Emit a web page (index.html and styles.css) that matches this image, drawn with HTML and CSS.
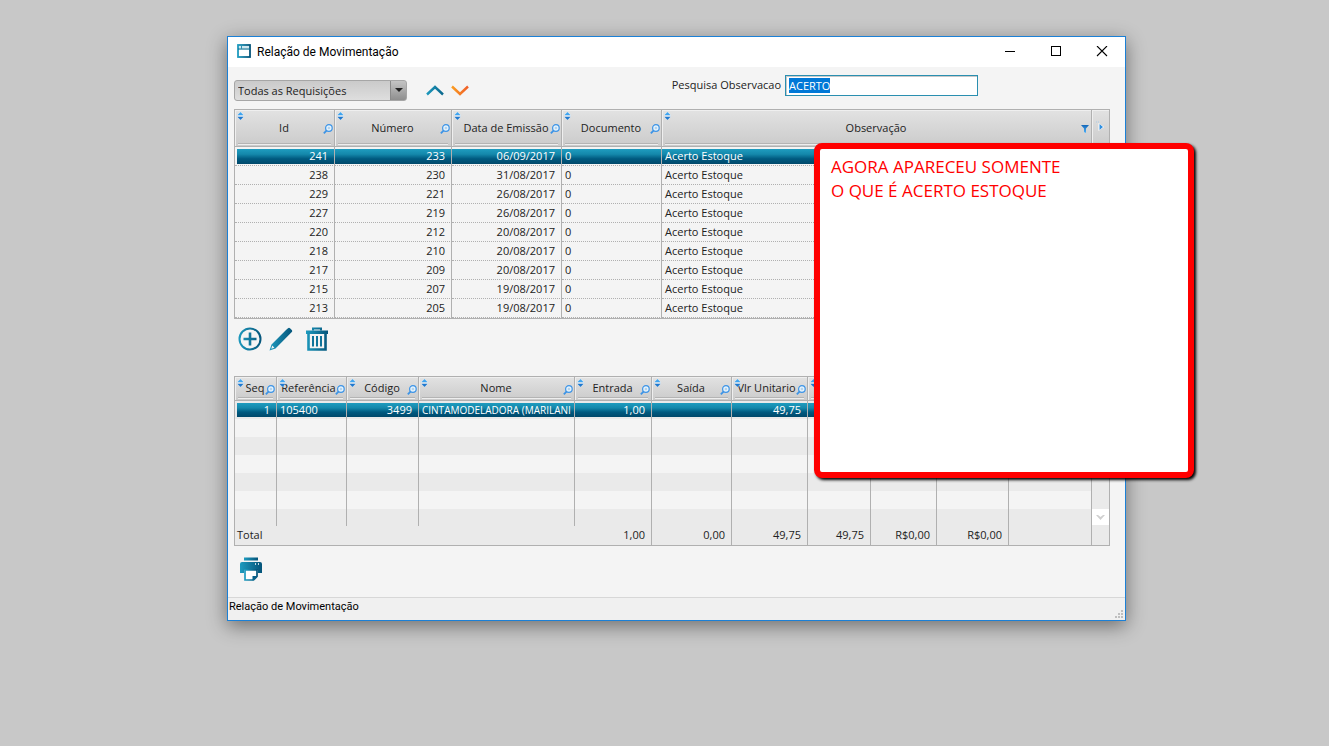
FILE: index.html
```
<!DOCTYPE html>
<html lang="pt-BR">
    <head>
        <meta charset="utf-8">
        <title>Relação de Movimentação</title>
        <link rel="stylesheet" href="styles.css">
    </head>
    <body>
        <!-- shared icons -->
        <svg class="defs" aria-hidden="true">
            <defs>
                <linearGradient id="teal" x1="0" y1="0" x2="1" y2="0">
                    <stop offset="0" stop-color="#1e9bbf"/>
                    <stop offset="1" stop-color="#045379"/>
                </linearGradient>
                <linearGradient id="tealLine" gradientUnits="userSpaceOnUse" x1="0" y1="0" x2="24" y2="0">
                    <stop offset="0" stop-color="#1e9bbf"/>
                    <stop offset="1" stop-color="#045379"/>
                </linearGradient>
                <linearGradient id="orange" gradientUnits="userSpaceOnUse" x1="0" y1="0" x2="18" y2="0">
                    <stop offset="0" stop-color="#fba01f"/>
                    <stop offset="1" stop-color="#ef5a29"/>
                </linearGradient>
                <linearGradient id="blue" x1="0" y1="0" x2="0" y2="1">
                    <stop offset="0" stop-color="#1668b8"/>
                    <stop offset="1" stop-color="#4db2fb"/>
                </linearGradient>
            </defs>
            <symbol id="sort" viewBox="0 0 7 8">
                <path d="M3.500 -.2L7.200 3.500H-.2zM3.500 8.200L7.200 4.500H-.2z" fill="#fff"/>
                <path d="M3.500 0L6.700 3.300H.3z" fill="#3fa4ef"/>
                <path d="M.3 4.700h6.400L3.500 8z" fill="#1f78ce"/>
            </symbol>
            <symbol id="lens" viewBox="0 0 10 10">
                <path d="M.8 9.300L3.500 6.600" stroke="#3d94e6" stroke-width="1.800"/>
                <circle cx="5.900" cy="4" r="3.300" fill="#e3f2fd" stroke="#3d94e6" stroke-width="1.200"/>
                <circle cx="5.900" cy="4" r="1.300" fill="#b4d2ea"/>
            </symbol>
        </svg>

        <div class="window">
            <div class="titlebar">
                <svg class="appicon" width="14" height="14" viewBox="0 0 14 14">
                    <rect x="1" y="1" width="12" height="12" fill="#fff" stroke="url(#teal)" stroke-width="1.800"/>
                    <path d="M1 5h12" stroke="#0f7598" stroke-width="1.200"/>
                    <path d="M4.500 1v4" stroke="#2b8fb0" stroke-width="1"/>
                    <path d="M2 3h2M5 3h7" stroke="#9fd0e0" stroke-width="1"/>
                </svg>
                <span class="caption">Relação de Movimentação</span>
                <button class="winbtn" aria-label="Minimizar"><svg width="12" height="12"><path d="M1 5.500h10" stroke="#000"/></svg></button>
                <button class="winbtn" aria-label="Maximizar"><svg width="12" height="12"><rect x="1.500" y=".5" width="9" height="9" fill="none" stroke="#000"/></svg></button>
                <button class="winbtn" aria-label="Fechar"><svg width="12" height="12"><path d="M1 0l10 10M11 0L1 10" stroke="#000" stroke-width="1.100"/></svg></button>
            </div>

            <div class="client">
                <div class="filters">
                    <div class="combo">
                        <select aria-label="Requisições"><option>Todas as Requisições</option></select>
                        <svg class="combo-arrow" width="8" height="4" viewBox="0 0 8 4"><path d="M0 0h8L4 4z" fill="#222"/></svg>
                    </div>
                    <button class="plain up" aria-label="Anterior"><svg width="18" height="11" viewBox="0 0 18 11"><path d="M1 9.500L9 2l8 7.500" fill="none" stroke="url(#tealLine)" stroke-width="2.400"/></svg></button>
                    <button class="plain down" aria-label="Próximo"><svg width="18" height="11" viewBox="0 0 18 11"><path d="M1 1.500L9 9l8-7.500" fill="none" stroke="url(#orange)" stroke-width="2.400"/></svg></button>
                    <div class="search">
                        <label for="pesquisa">Pesquisa Observacao</label>
                        <input id="pesquisa" type="text" value="ACERTO">
                    </div>
                </div>

                <table class="grid moves">
                    <colgroup>
                        <col class="w100"><col class="w117"><col class="w110"><col class="w100"><col><col class="w17">
                    </colgroup>
                    <thead>
                        <tr>
                            <th><svg class="sort"><use href="#sort"/></svg>Id<svg class="lens"><use href="#lens"/></svg></th>
                            <th><svg class="sort"><use href="#sort"/></svg>Número<svg class="lens"><use href="#lens"/></svg></th>
                            <th><svg class="sort"><use href="#sort"/></svg>Data de Emissão<svg class="lens"><use href="#lens"/></svg></th>
                            <th><svg class="sort"><use href="#sort"/></svg>Documento<svg class="lens"><use href="#lens"/></svg></th>
                            <th><svg class="sort"><use href="#sort"/></svg>Observação<svg class="funnel" viewBox="0 0 8 8"><path d="M0 0h8L5 3.500V8L3 7V3.500z" fill="url(#blue)"/></svg></th>
                            <th><svg class="more" viewBox="0 0 8 10"><path d="M0 1h1M2 1h1" stroke="#aacbe6"/><path d="M2.500 2v8l5.500-4z" fill="#fff"/><path d="M3.500 3v6L7 6z" fill="#2f8fe0"/></svg></th>
                        </tr>
                    </thead>
                    <tbody>
                        <tr class="selected"><td class="num">241</td><td class="num">233</td><td class="num">06/09/2017</td><td>0</td><td>Acerto Estoque</td><td></td></tr>
                        <tr><td class="num">238</td><td class="num">230</td><td class="num">31/08/2017</td><td>0</td><td>Acerto Estoque</td><td></td></tr>
                        <tr><td class="num">229</td><td class="num">221</td><td class="num">26/08/2017</td><td>0</td><td>Acerto Estoque</td><td></td></tr>
                        <tr><td class="num">227</td><td class="num">219</td><td class="num">26/08/2017</td><td>0</td><td>Acerto Estoque</td><td></td></tr>
                        <tr><td class="num">220</td><td class="num">212</td><td class="num">20/08/2017</td><td>0</td><td>Acerto Estoque</td><td></td></tr>
                        <tr><td class="num">218</td><td class="num">210</td><td class="num">20/08/2017</td><td>0</td><td>Acerto Estoque</td><td></td></tr>
                        <tr><td class="num">217</td><td class="num">209</td><td class="num">20/08/2017</td><td>0</td><td>Acerto Estoque</td><td></td></tr>
                        <tr><td class="num">215</td><td class="num">207</td><td class="num">19/08/2017</td><td>0</td><td>Acerto Estoque</td><td></td></tr>
                        <tr><td class="num">213</td><td class="num">205</td><td class="num">19/08/2017</td><td>0</td><td>Acerto Estoque</td><td></td></tr>
                    </tbody>
                </table>

                <div class="actions">
                    <button class="plain" aria-label="Incluir">
                        <svg width="24" height="24" viewBox="0 0 24 24" fill="none" stroke="url(#tealLine)">
                            <circle cx="12" cy="12" r="10.500" stroke-width="2"/>
                            <path d="M5.500 12.010L18.500 12M12 5.500L12.010 18.500" stroke-width="2.600"/>
                        </svg>
                    </button>
                    <button class="plain" aria-label="Alterar">
                        <svg width="24" height="24" viewBox="0 0 24 24">
                            <path d="M.5 23.500L2.500 17.500L17 3L19 1.200Q20 .4 21 1.200L23 3.200Q23.600 4.200 22.800 5L6.500 21.500z" fill="url(#tealLine)"/>
                            <path d="M2.200 21.800L3.300 18.600L5.400 20.700z" fill="#f3f3f3"/>
                        </svg>
                    </button>
                    <button class="plain trash" aria-label="Excluir">
                        <svg width="24" height="24" viewBox="0 0 24 24">
                            <path d="M8 3.500V1.500h8v2" fill="none" stroke="url(#tealLine)" stroke-width="2"/>
                            <path d="M1 3.500h22v3.500H1z" fill="url(#teal)"/>
                            <path d="M3.500 6v16.500h17V6" fill="none" stroke="url(#tealLine)" stroke-width="2.600"/>
                            <path d="M8 9v10.500M12 9v10.500M16 9v10.500" stroke="#10749a" stroke-width="2"/>
                        </svg>
                    </button>
                </div>

                <table class="grid items">
                    <colgroup>
                        <col class="w42"><col class="w70"><col class="w72"><col class="w156"><col class="w77"><col class="w80"><col class="w76"><col class="w63"><col class="w66"><col class="w72"><col><col class="w17">
                    </colgroup>
                    <thead>
                        <tr>
                            <th><svg class="sort"><use href="#sort"/></svg>Seq<svg class="lens"><use href="#lens"/></svg></th>
                            <th class="tight"><svg class="sort"><use href="#sort"/></svg>Referência<svg class="lens"><use href="#lens"/></svg></th>
                            <th><svg class="sort"><use href="#sort"/></svg>Código<svg class="lens"><use href="#lens"/></svg></th>
                            <th><svg class="sort"><use href="#sort"/></svg>Nome<svg class="lens"><use href="#lens"/></svg></th>
                            <th><svg class="sort"><use href="#sort"/></svg>Entrada<svg class="lens"><use href="#lens"/></svg></th>
                            <th><svg class="sort"><use href="#sort"/></svg>Saída<svg class="lens"><use href="#lens"/></svg></th>
                            <th class="tight"><svg class="sort"><use href="#sort"/></svg>Vlr Unitario<svg class="lens"><use href="#lens"/></svg></th>
                            <th><svg class="sort"><use href="#sort"/></svg></th>
                            <th></th><th></th><th></th><th></th>
                        </tr>
                    </thead>
                    <tbody>
                        <tr class="selected"><td class="num">1</td><td>105400</td><td class="num">3499</td><td class="name">CINTAMODELADORA (MARILANI</td><td class="num">1,00</td><td></td><td class="num">49,75</td><td></td><td></td><td></td><td></td><td></td></tr>
                        <tr><td></td><td></td><td></td><td></td><td></td><td></td><td></td><td></td><td></td><td></td><td></td><td></td></tr>
                        <tr><td></td><td></td><td></td><td></td><td></td><td></td><td></td><td></td><td></td><td></td><td></td><td></td></tr>
                        <tr><td></td><td></td><td></td><td></td><td></td><td></td><td></td><td></td><td></td><td></td><td></td><td></td></tr>
                        <tr><td></td><td></td><td></td><td></td><td></td><td></td><td></td><td></td><td></td><td></td><td></td><td class="track"></td></tr>
                        <tr><td></td><td></td><td></td><td></td><td></td><td></td><td></td><td></td><td></td><td></td><td></td><td class="track"></td></tr>
                        <tr class="last"><td></td><td></td><td></td><td></td><td></td><td></td><td></td><td></td><td></td><td></td><td></td><td class="track"><button class="scrolldown" aria-label="Rolar para baixo"><svg width="9" height="5" viewBox="0 0 9 5"><path d="M0 0h2l2.500 2L7 0h2L4.500 5z" fill="#cfcfcf"/></svg></button></td></tr>
                    </tbody>
                    <tfoot>
                        <tr><td class="open total" colspan="4">Total</td><td class="num">1,00</td><td class="num">0,00</td><td class="num">49,75</td><td class="num">49,75</td><td class="num">R$0,00</td><td class="num">R$0,00</td><td></td><td></td></tr>
                    </tfoot>
                </table>

                <div class="printbar">
                    <button class="plain" aria-label="Imprimir">
                        <svg width="22" height="24" viewBox="0 0 22 24">
                            <path d="M4 .5h14v3H4z" fill="url(#teal)"/>
                            <path d="M2 5h18q2 0 2 2v9h-4v-3H4v3H0V7q0-2 2-2z" fill="url(#teal)"/>
                            <path d="M15 7h1M18 7h1" stroke="#fff" stroke-width="1.500"/>
                            <path d="M5 13h12v6.500L13.500 23H5z" fill="#fff" stroke="url(#teal)" stroke-width="1.700"/>
                            <path d="M12.500 23.500v-4.500h4.500z" fill="#07608a"/>
                        </svg>
                    </button>
                </div>
            </div>

            <div class="statusbar">
                <span>Relação de Movimentação</span>
                <svg class="grip" width="8" height="8" viewBox="0 0 8 8"><path d="M6 0h2v2H6zM3 3h2v2H3zM6 3h2v2H6zM0 6h2v2H0zM3 6h2v2H3zM6 6h2v2H6z" fill="#bfbfbf"/></svg>
            </div>

            <div class="callout">
                AGORA APARECEU SOMENTE<br>
                O QUE É ACERTO ESTOQUE
            </div>
        </div>
        <script src="script.js"></script>
    </body>
</html>
```
FILE: styles.css
```
body{
    box-sizing: border-box;
    min-height: 100vh;
    margin: 0;
    padding: 36px 203px 0 227px;
    background-color: #c8c8c8;
    font-family: "Trebuchet MS", "Open Sans", sans-serif;
    font-size: 11px;
    color: #222;
}
button, input, select{
    font: inherit;
    color: inherit;
}
button{
    border: 0;
    padding: 0;
    background: none;
}
svg{
    display: block;
}
svg.defs{
    position: absolute;
    width: 0;
    height: 0;
}
div.window{
    position: relative;
    border: 1px solid #1b80d6;
    background-color: #f4f4f4;
    box-shadow: 0 5px 18px rgba(0,0,0,0.45);
}

/* title bar */
div.titlebar{
    display: flex;
    align-items: center;
    height: 30px;
    padding-left: 9px;
    background-color: #fff;
    color: #000;
    font-family: Roboto, sans-serif;
    font-size: 12px;
}
svg.appicon{
    margin-bottom: 2px;
}
span.caption{
    flex: 1;
    padding-left: 6px;
}
button.winbtn{
    display: flex;
    align-items: center;
    justify-content: center;
    width: 46px;
    height: 30px;
}

/* filters */
div.client{
    padding: 8px 15px 0 6px;
}
div.filters{
    display: flex;
    align-items: flex-start;
    height: 34px;
}
div.combo{
    position: relative;
    margin-top: 5px;
}
div.combo select{
    display: block;
    appearance: none;
    width: 173px;
    height: 21px;
    padding: 0 20px 1px 3px;
    border: 1px solid #a6a6a6;
    border-radius: 3px;
    background: linear-gradient(#8a8a8a, #8a8a8a) right 15px top / 1px 100% no-repeat,
                linear-gradient(#c4c4c4, #8f8f8f) right / 15px 100% no-repeat,
                linear-gradient(#cacaca, #dedede);
}
svg.combo-arrow{
    position: absolute;
    right: 4px;
    top: 8px;
    pointer-events: none;
}
button.up{
    margin: 10px 0 0 19px;
}
button.down{
    margin: 10px 0 0 7px;
}
div.search{
    display: flex;
    align-items: center;
    gap: 4px;
    margin: 0 132px 0 auto;
}
div.search label{
    padding-bottom: 2px;
}
div.search input{
    box-sizing: border-box;
    width: 193px;
    height: 21px;
    padding: 0 3px 1px;
    border: 1px solid #2a8fb0;
    background-color: #fff;
    box-shadow: inset 1px 1px 0 #c9c9c9;
    outline: 0;
}
div.search input::selection{
    background-color: #0078d7;
    color: #fff;
}

/* grids */
table.grid{
    width: 100%;
    table-layout: fixed;
    border-collapse: separate;
    border-spacing: 0;
    border: 1px solid #b0b0b0;
}
col.w17{ width: 17px; }
col.w42{ width: 42px; }
col.w63{ width: 63px; }
col.w66{ width: 66px; }
col.w70{ width: 70px; }
col.w72{ width: 72px; }
col.w76{ width: 76px; }
col.w77{ width: 77px; }
col.w80{ width: 80px; }
col.w100{ width: 100px; }
col.w110{ width: 110px; }
col.w117{ width: 117px; }
col.w156{ width: 156px; }
table.grid th, table.grid td{
    box-sizing: border-box;
    padding: 0 3px;
    border-right: 1px solid #b0b0b0;
    text-align: left;
    white-space: nowrap;
    overflow: hidden;
}
table.grid th{
    position: relative;
    padding: 0 1px 2px 0;
    border-bottom: 1px solid #b0b0b0;
    background: linear-gradient(#e2e2e2, #cbcbcb);
    box-shadow: inset 1px 1px 0 #efefef;
    font-weight: normal;
    text-align: center;
}
table.grid th.tight{
    padding-right: 6px;
}
table.grid th:last-child, table.grid td:last-child{
    padding: 0;
    border-right: 0;
}
table.grid th::after{
    content: "";
    position: absolute;
    left: 3px;
    right: 3px;
    bottom: 1px;
    border-top: 1px solid #b4b4b4;
    border-bottom: 1px solid #eee;
}
table.grid td.num{
    padding-right: 6px;
    text-align: right;
}
svg.sort{
    position: absolute;
    left: 2px;
    top: 2px;
    width: 7px;
    height: 8px;
}
svg.lens{
    position: absolute;
    right: 1px;
    top: 50%;
    width: 10px;
    height: 10px;
    margin-top: -4px;
}
svg.funnel{
    position: absolute;
    right: 2px;
    top: 50%;
    width: 8px;
    height: 8px;
    margin-top: -3px;
}
svg.more{
    position: absolute;
    left: 4px;
    top: 50%;
    width: 8px;
    height: 10px;
    margin-top: -7px;
}
table.moves th{
    height: 37px;
}
table.moves td{
    height: 19px;
    border-bottom: 1px dotted #b0b0b0;
    line-height: 18px;
}
tr.selected td{
    color: #fff;
    background: linear-gradient(#1f9cbf, #1488ab 35%, #005a80 65%, #00486a) 0 2px / 100% 15px no-repeat;
}
tr.selected td:first-child{
    background-position: 2px 2px;
}
table.items th{
    height: 24px;
}
table.items td{
    height: 18px;
    padding-bottom: 1px;
    line-height: 16px;
}
table.items tbody tr:nth-child(odd) td{
    background-color: #eaeaea;
}
table.items tr.selected td{
    background-size: 100% 14px;
}
table.items td.name{
    font-size: 10px;
}
table.items tfoot td{
    height: 19px;
    padding-bottom: 2px;
    background-color: #eaeaea;
}
table.grid td.open{
    border-right-color: transparent;
}
table.grid td.total{
    padding-left: 2px;
}
table.items tr.last td{
    height: 17px;
    vertical-align: top;
}
table.items td.track{
    background-color: #eaeaea;
}
button.scrolldown{
    display: flex;
    align-items: center;
    justify-content: center;
    width: 100%;
    height: 16px;
    background-color: #fff;
}

/* buttons under the grids */
div.actions{
    display: flex;
    gap: 7px;
    height: 49px;
    padding: 8px 0 0 4px;
}
button.plain{
    align-self: flex-start;
}
button.trash{
    margin-left: 5px;
}
div.printbar{
    height: 40px;
    padding: 11px 0 0 6px;
}
div.statusbar{
    display: flex;
    justify-content: space-between;
    height: 22px;
    padding: 0 1px;
    border-top: 1px solid #d7d7d7;
    background-color: #f0f0f0;
    color: #000;
    font-family: Roboto, sans-serif;
    line-height: 18px;
}
svg.grip{
    align-self: flex-end;
    margin: 0 1px 2px 0;
}

/* note laid over the window */
div.callout{
    position: absolute;
    top: 106px;
    left: 586px;
    right: -69px;
    box-sizing: border-box;
    height: 335px;
    padding: 6px 11px;
    border: 6px solid #f00;
    border-radius: 8px;
    background-color: #fff;
    box-shadow: 2px 2px 3px #000;
    color: #f00;
    font-family: "Open Sans", sans-serif;
    font-size: 17px;
    line-height: 24px;
}
```
FILE: script.js
```
// the search box opens with its text selected
var pesquisa = document.getElementById('pesquisa');
pesquisa.focus();
pesquisa.select();
```
